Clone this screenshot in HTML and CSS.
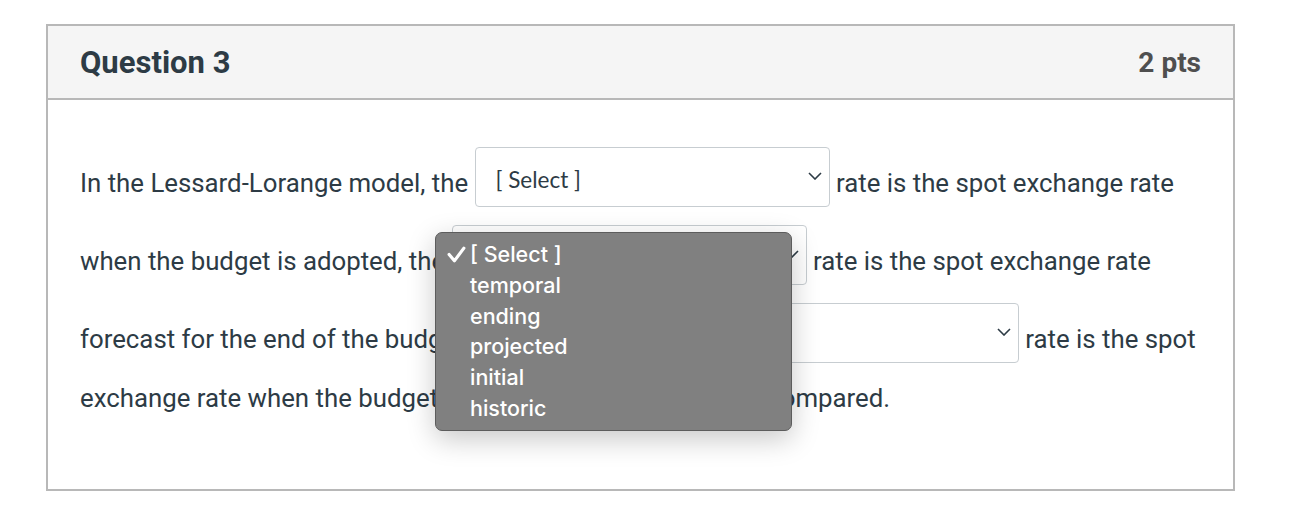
FILE: index.html
```html
<!DOCTYPE html>
<html lang="en">
<head>
  <meta charset="UTF-8" />
  <title>Question 3</title>
  <link rel="stylesheet" href="styles.css">
</head>
<body>

  <div class="question">
    <div class="question-header">
      <h2>Question 3</h2>
      <span class="points">2 pts</span>
    </div>

    <div class="question-body">
      <p class="question-text">
        In the Lessard-Lorange model, the
        <span class="select-wrap">
          <select><option>[ Select ]</option></select>
          <svg class="chevron" viewBox="0 0 14 8"><polyline points="1,1 7,7 13,1" /></svg>
        </span>
        rate is the spot exchange rate when the budget is adopted, the
        <span class="select-wrap">
          <select><option>[ Select ]</option></select>
          <svg class="chevron" viewBox="0 0 14 8"><polyline points="1,1 7,7 13,1" /></svg>
        </span>
        rate is the spot exchange rate forecast for the end of the budget period, while the
        <span class="select-wrap">
          <select><option>[ Select ]</option></select>
          <svg class="chevron" viewBox="0 0 14 8"><polyline points="1,1 7,7 13,1" /></svg>
        </span>
        rate is the spot exchange rate when the budget and actual performance are compared.
      </p>
    </div>

    <!-- open dropdown of the second select -->
    <ul class="dropdown">
      <li class="checked">
        <svg class="check" viewBox="0 0 18 16"><polyline points="2,8 7,14 16,2" /></svg>
        [ Select ]
      </li>
      <li>temporal</li>
      <li>ending</li>
      <li>projected</li>
      <li>initial</li>
      <li>historic</li>
    </ul>
  </div>

</body>
</html>
```

FILE: styles.css
```css
body {
  margin: 0;
  padding: 24px 0 0 46px;
  background: #fff;
  font-family: Roboto, "Liberation Sans", sans-serif;
  color: #2d3b45;
}
.question {
  position: relative;
  width: 1185px;
  border: 2px solid #b8b8b8;
}
.question-header {
  display: flex;
  justify-content: space-between;
  align-items: center;
  height: 72px;
  padding: 0 32px;
  background: #f5f5f5;
  border-bottom: 2px solid #b8b8b8;
}
.question-header h2 {
  margin: 0;
  font-size: 31px;
  font-weight: bold;
}
.points {
  font-size: 28px;
  font-weight: bold;
  color: #4f4f4f;
}
.question-body {
  padding: 46px 32px 73px;
}
.question-text {
  margin: 0;
  font-size: 25.8px;
  line-height: 36px;
}
.select-wrap {
  position: relative;
  display: inline-block;
  width: 355px;
  vertical-align: middle;
  margin: 1px 0 17px;
}
.select-wrap select {
  appearance: none;
  -webkit-appearance: none;
  width: 100%;
  height: 60px;
  padding: 4px 40px 0 20px;
  border: 1px solid #c7cdd1;
  border-radius: 4px;
  background: #fff;
  font-family: Lato, sans-serif;
  font-size: 22.5px;
  color: #2d3b45;
}
.chevron {
  position: absolute;
  right: 8px;
  top: 25px;
  width: 14px;
  height: 8px;
  fill: none;
  stroke: #2d3b45;
  stroke-width: 1.6;
}
.dropdown {
  position: absolute;
  left: 387px;
  top: 206px;
  width: 355px;
  margin: 0;
  padding: 6px 0;
  list-style: none;
  background: #808080;
  border: 1px solid #5c5c5c;
  border-radius: 7px;
  box-shadow: 0 8px 28px rgba(0, 0, 0, 0.22);
}
.dropdown li {
  position: relative;
  padding-left: 34px;
  height: 30.8px;
  line-height: 30.8px;
  font-family: Inter, "Liberation Sans", sans-serif;
  font-size: 21.5px;
  font-weight: 500;
  color: #fff;
}
.check {
  position: absolute;
  left: 11px;
  top: 7px;
  width: 19px;
  height: 17px;
  fill: none;
  stroke: #fff;
  stroke-width: 3;
  stroke-linecap: round;
  stroke-linejoin: round;
}
```
